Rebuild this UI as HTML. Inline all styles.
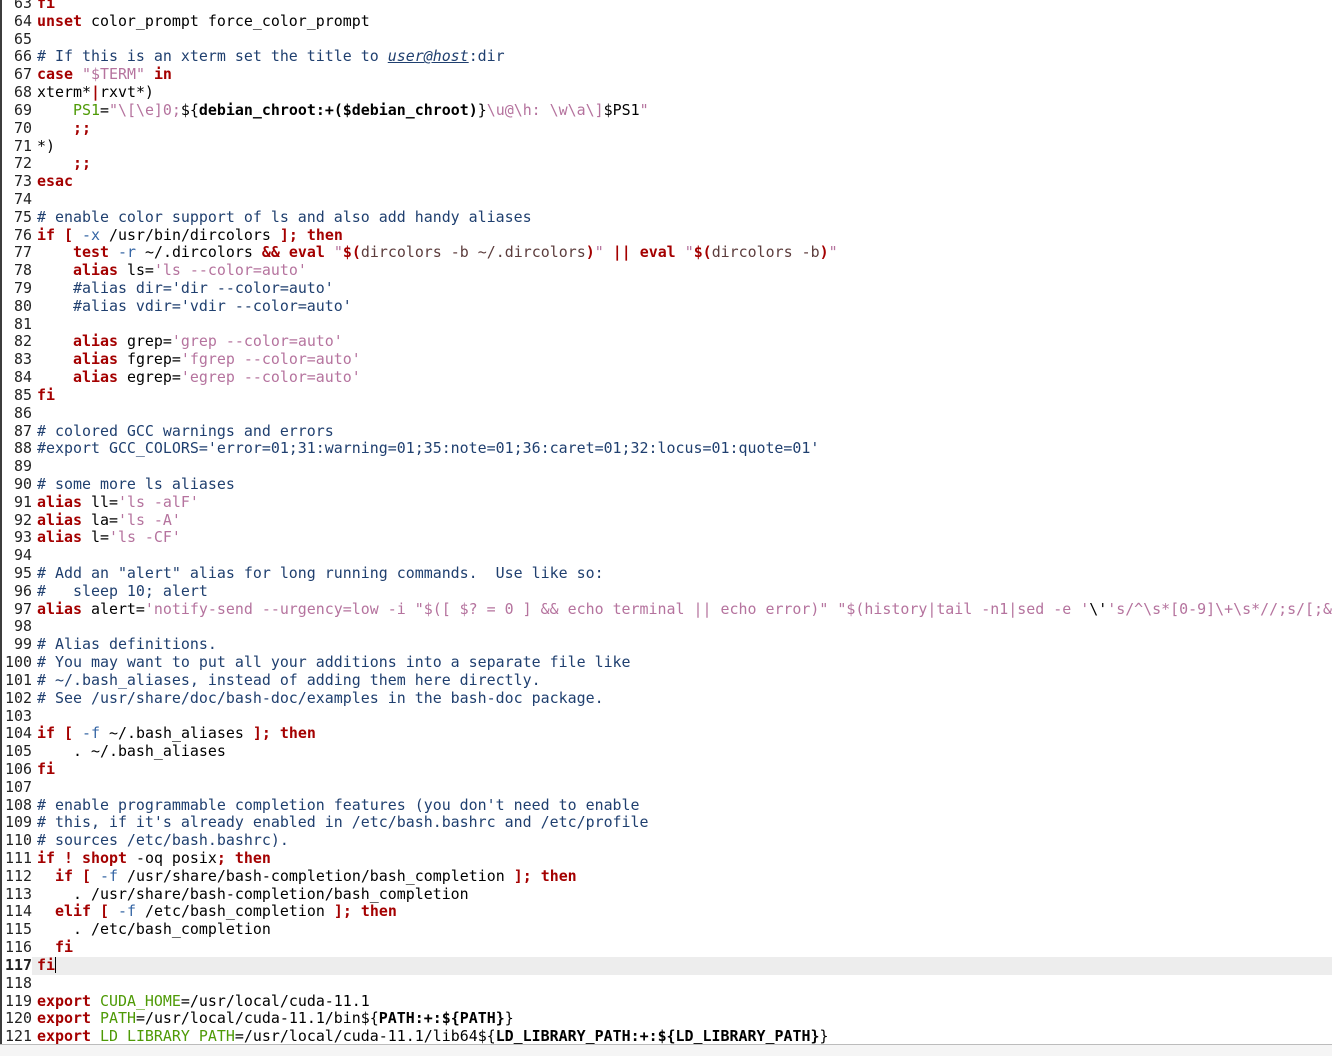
<!DOCTYPE html>
<html><head><meta charset="utf-8"><style>
html,body{margin:0;padding:0;background:#fff;width:1332px;height:1056px;overflow:hidden;position:relative}
.ed{position:absolute;left:0;top:-5px;font-family:"DejaVu Sans Mono","Liberation Mono",monospace;font-size:14.94px;line-height:17.82px;color:#000}
.l{height:17.82px;position:relative;white-space:pre}
.n{display:inline-block;width:32px;text-align:right;color:#222;margin-right:5px}
.cur{background:#ededed;width:1332px}
.cur .n{font-weight:bold;background:#fff}
.k{color:#a40000;font-weight:bold}
.s{color:#b5739e}
.c{color:#1f3f6f}
.o{color:#3465a4}
.v{color:#4e9a06}
.b{font-weight:bold}
.strip{position:absolute;left:0;top:0;width:2px;height:1045px;background:#3c3c3c}
.bot{position:absolute;left:0;top:1044px;width:1332px;height:12px;background:#f5f5f5;border-top:1px solid #bcbcbc}
.caret{display:inline-block;width:1px;height:16px;background:#000;vertical-align:-3px}
</style></head><body>
<div class="ed">
<div class="l"><span class="n">63</span><span class="k">fi</span></div>
<div class="l"><span class="n">64</span><span class="k">unset</span> color_prompt force_color_prompt</div>
<div class="l"><span class="n">65</span></div>
<div class="l"><span class="n">66</span><span class="c"># If this is an xterm set the title to <u><i>user@host</i></u>:dir</span></div>
<div class="l"><span class="n">67</span><span class="k">case</span> <span class="s">"$TERM"</span> <span class="k">in</span></div>
<div class="l"><span class="n">68</span>xterm*<span class="k">|</span>rxvt*)</div>
<div class="l"><span class="n">69</span>    <span class="v">PS1</span>=<span class="s">"\[\e]0;</span>${<span class="b">debian_chroot:+($debian_chroot)</span>}<span class="s">\u@\h: \w\a\]</span>$PS1<span class="s">"</span></div>
<div class="l"><span class="n">70</span>    <span class="k">;;</span></div>
<div class="l"><span class="n">71</span>*)</div>
<div class="l"><span class="n">72</span>    <span class="k">;;</span></div>
<div class="l"><span class="n">73</span><span class="k">esac</span></div>
<div class="l"><span class="n">74</span></div>
<div class="l"><span class="n">75</span><span class="c"># enable color support of ls and also add handy aliases</span></div>
<div class="l"><span class="n">76</span><span class="k">if</span> <span class="k">[</span> <span class="o">-x</span> /usr/bin/dircolors <span class="k">];</span> <span class="k">then</span></div>
<div class="l"><span class="n">77</span>    <span class="k">test</span> <span class="o">-r</span> ~/.dircolors <span class="k">&amp;&amp;</span> <span class="k">eval</span> <span class="s">"</span><span class="k">$(</span><span class="s" style="color:#5c3c3c">dircolors -b ~/.dircolors</span><span class="k">)</span><span class="s">"</span> <span class="k">||</span> <span class="k">eval</span> <span class="s">"</span><span class="k">$(</span><span class="s" style="color:#5c3c3c">dircolors -b</span><span class="k">)</span><span class="s">"</span></div>
<div class="l"><span class="n">78</span>    <span class="k">alias</span> ls=<span class="s">'ls --color=auto'</span></div>
<div class="l"><span class="n">79</span>    <span class="c">#alias dir='dir --color=auto'</span></div>
<div class="l"><span class="n">80</span>    <span class="c">#alias vdir='vdir --color=auto'</span></div>
<div class="l"><span class="n">81</span></div>
<div class="l"><span class="n">82</span>    <span class="k">alias</span> grep=<span class="s">'grep --color=auto'</span></div>
<div class="l"><span class="n">83</span>    <span class="k">alias</span> fgrep=<span class="s">'fgrep --color=auto'</span></div>
<div class="l"><span class="n">84</span>    <span class="k">alias</span> egrep=<span class="s">'egrep --color=auto'</span></div>
<div class="l"><span class="n">85</span><span class="k">fi</span></div>
<div class="l"><span class="n">86</span></div>
<div class="l"><span class="n">87</span><span class="c"># colored GCC warnings and errors</span></div>
<div class="l"><span class="n">88</span><span class="c">#export GCC_COLORS='error=01;31:warning=01;35:note=01;36:caret=01;32:locus=01:quote=01'</span></div>
<div class="l"><span class="n">89</span></div>
<div class="l"><span class="n">90</span><span class="c"># some more ls aliases</span></div>
<div class="l"><span class="n">91</span><span class="k">alias</span> ll=<span class="s">'ls -alF'</span></div>
<div class="l"><span class="n">92</span><span class="k">alias</span> la=<span class="s">'ls -A'</span></div>
<div class="l"><span class="n">93</span><span class="k">alias</span> l=<span class="s">'ls -CF'</span></div>
<div class="l"><span class="n">94</span></div>
<div class="l"><span class="n">95</span><span class="c"># Add an "alert" alias for long running commands.  Use like so:</span></div>
<div class="l"><span class="n">96</span><span class="c">#   sleep 10; alert</span></div>
<div class="l"><span class="n">97</span><span class="k">alias</span> alert=<span class="s">'notify-send --urgency=low -i "$([ $? = 0 ] &amp;&amp; echo terminal || echo error)" "$(history|tail -n1|sed -e '</span>\'<span class="s">'s/^\s*[0-9]\+\s*//;s/[;&amp;</span></div>
<div class="l"><span class="n">98</span></div>
<div class="l"><span class="n">99</span><span class="c"># Alias definitions.</span></div>
<div class="l"><span class="n">100</span><span class="c"># You may want to put all your additions into a separate file like</span></div>
<div class="l"><span class="n">101</span><span class="c"># ~/.bash_aliases, instead of adding them here directly.</span></div>
<div class="l"><span class="n">102</span><span class="c"># See /usr/share/doc/bash-doc/examples in the bash-doc package.</span></div>
<div class="l"><span class="n">103</span></div>
<div class="l"><span class="n">104</span><span class="k">if</span> <span class="k">[</span> <span class="o">-f</span> ~/.bash_aliases <span class="k">];</span> <span class="k">then</span></div>
<div class="l"><span class="n">105</span>    . ~/.bash_aliases</div>
<div class="l"><span class="n">106</span><span class="k">fi</span></div>
<div class="l"><span class="n">107</span></div>
<div class="l"><span class="n">108</span><span class="c"># enable programmable completion features (you don't need to enable</span></div>
<div class="l"><span class="n">109</span><span class="c"># this, if it's already enabled in /etc/bash.bashrc and /etc/profile</span></div>
<div class="l"><span class="n">110</span><span class="c"># sources /etc/bash.bashrc).</span></div>
<div class="l"><span class="n">111</span><span class="k">if</span> <span class="k">!</span> <span class="k">shopt</span> -oq posix<span class="k">;</span> <span class="k">then</span></div>
<div class="l"><span class="n">112</span>  <span class="k">if</span> <span class="k">[</span> <span class="o">-f</span> /usr/share/bash-completion/bash_completion <span class="k">];</span> <span class="k">then</span></div>
<div class="l"><span class="n">113</span>    . /usr/share/bash-completion/bash_completion</div>
<div class="l"><span class="n">114</span>  <span class="k">elif</span> <span class="k">[</span> <span class="o">-f</span> /etc/bash_completion <span class="k">];</span> <span class="k">then</span></div>
<div class="l"><span class="n">115</span>    . /etc/bash_completion</div>
<div class="l"><span class="n">116</span>  <span class="k">fi</span></div>
<div class="l cur"><span class="n">117</span><span class="k">fi</span><span class="caret"></span></div>
<div class="l"><span class="n">118</span></div>
<div class="l"><span class="n">119</span><span class="k">export</span> <span class="v">CUDA_HOME</span>=/usr/local/cuda-11.1</div>
<div class="l"><span class="n">120</span><span class="k">export</span> <span class="v">PATH</span>=/usr/local/cuda-11.1/bin${<span class="b">PATH:+:${PATH}</span>}</div>
<div class="l"><span class="n">121</span><span class="k">export</span> <span class="v">LD_LIBRARY_PATH</span>=/usr/local/cuda-11.1/lib64${<span class="b">LD_LIBRARY_PATH:+:${LD_LIBRARY_PATH}</span>}</div>
</div>
<div class="strip"></div>
<div class="bot"></div>
</body></html>
